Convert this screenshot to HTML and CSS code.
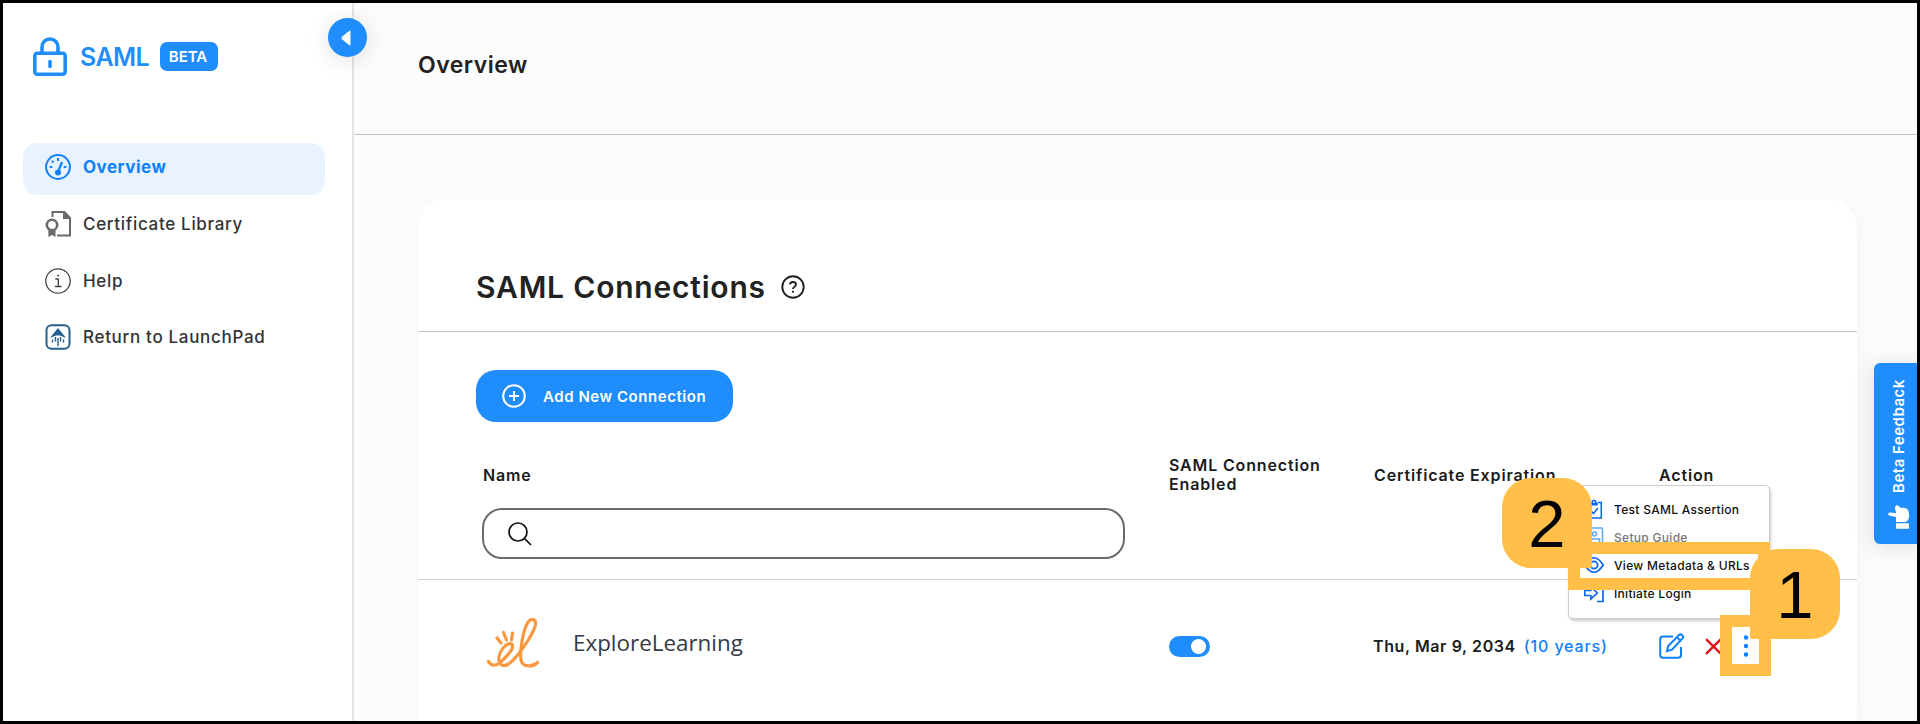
FILE: index.html
```html
<!DOCTYPE html>
<html lang="en">
<head>
<meta charset="utf-8">
<title>SAML Overview</title>
<link rel="stylesheet" href="styles.css">
</head>
<body>
<div class="frame">
  <aside class="sidebar">
    <div class="brand">
      <svg class="brand-lock" viewBox="0 0 34 39" fill="none" stroke="#1f8dfb" stroke-width="3.6"><rect x="1.8" y="16.2" width="30.4" height="21" rx="2.5"/><path d="M9 16V10a8 8 0 0 1 16 0v6"/><path d="M17 24.5v5" stroke-linecap="round"/></svg>
      <span class="brand-name">SAML</span><span class="beta"><span>BETA</span></span>
    </div>
    <nav class="nav">
      <a class="nav-item active">
        <svg viewBox="0 0 26 26" fill="none" stroke="#0f80fb" stroke-width="2"><circle cx="13" cy="13" r="11.9"/><path d="M13 18l4-10" stroke-width="2.2"/><circle cx="13" cy="18.5" r="2" fill="#0f80fb"/><path d="M13 4v3M4.7 13h2.6M18.7 13h2.6M6.8 7l1.8 1.6" stroke-width="2"/></svg>
        <span>Overview</span></a>
      <a class="nav-item">
        <svg viewBox="0 0 26 26" fill="none" stroke="#6b6b6b" stroke-width="2"><path d="M7.5 6V1h12l5.5 6v17.5H12"/><path d="M18 1h2l5 5v2h-7z" fill="#6b6b6b" stroke="none"/><circle cx="7" cy="14" r="5.2" stroke-width="2.6"/><path d="M3.4 18.5V26L7 24l3.500 2v-7.500" fill="#6b6b6b" stroke="none"/></svg>
        <span>Certificate Library</span></a>
      <a class="nav-item">
        <svg viewBox="0 0 26 26" fill="none" stroke="#444" stroke-width="1.3"><circle cx="13" cy="13" r="12.2"/><path d="M10.300 11h3v7.500M9.800 18.500h6.700M12.200 7.500h2"/></svg>
        <span>Help</span></a>
      <a class="nav-item">
        <svg viewBox="0 0 26 26" fill="none" stroke="#24618f" stroke-width="2"><rect x="1.500" y="1.200" width="23" height="23.600" rx="5"/><path d="M13 4l4.500 5.500 3.500 4.500-6-2.500h-4l-6 2.500 3.500-4.500z" fill="#24618f" stroke="none"/><path d="M13 14v8M10.500 13v4.500M15.500 13v4.500M7.500 15.500v3M18.500 15.500v3" stroke-width="1.400"/></svg>
        <span>Return to LaunchPad</span></a>
    </nav>
    <button class="collapse" aria-label="Collapse"><svg viewBox="0 0 10 16"><path d="M9.500 .5v15L8 15 1 9.200Q0 8 1 6.800L8 1z" fill="#fff"/></svg></button>
  </aside>
  <main class="main">
    <header class="topbar"><h1>Overview</h1></header>
    <section class="card">
      <div class="card-head">
        <h2>SAML Connections</h2>
        <svg viewBox="0 0 24 24" fill="none" stroke="#222" stroke-width="1.900"><circle cx="12" cy="12" r="10.700"/><path d="M9 9.400c.2-3.300 6-3.200 6 .2 0 2-3 2.400-3 4.400"/><path d="M12 15.700v2.100"/></svg>
      </div>
      <div class="card-body">
        <button class="add"><svg viewBox="0 0 24 24" fill="none" stroke="#fff" stroke-width="2"><circle cx="12" cy="12" r="10.800"/><path d="M12 7v10M7 12h10"/></svg><span>Add New Connection</span></button>
        <div class="table-head">
          <div class="col-name"><b class="h-name">Name</b>
            <div class="search"><svg viewBox="0 0 24 24" fill="none" stroke="#111" stroke-width="1.700"><circle cx="10" cy="10" r="9"/><path d="M16.500 16.500l6.500 6.500"/></svg></div>
          </div>
          <b class="h-enabled">SAML Connection<br>Enabled</b>
          <b class="h-cert">Certificate Expiration</b>
          <b class="h-action">Action</b>
        </div>
        <div class="row">
          <div class="app">
            <svg viewBox="0 0 52 50" fill="none" stroke="#f9983f" stroke-width="3.200" stroke-linecap="round" stroke-linejoin="round"><path d="M1.500 43.500c3 5.500 9 4.500 15-2 5-5.500 10-10 9-14-1-3-6-2-9 2-5 6-6 13-3 16.500 4 4 10-.5 15-6.500 8-9 19-26 20-33 .6-6-5-7-8-1.500-5 9-8.500 32-6 38.500 2 5.500 11 6 16 1"/><path d="M10 20l4 5M16.500 14.500l3 7.500M25.500 15l-1 7" /></svg>
            <span>ExploreLearning</span>
          </div>
          <div class="toggle"><i></i></div>
          <div class="expiry"><span class="date">Thu, Mar 9, 2034</span><span class="years">(10 years)</span></div>
          <div class="actions">
            <svg class="edit" viewBox="0 0 26 26" fill="none" stroke="#0f80fb" stroke-width="2"><path d="M14 3.500H4Q1.200 3.500 1.200 6.500V22Q1.200 24.800 4 24.800H19Q22 24.800 22 22V14"/><path d="M8 18l1.200-5L20 2q1.500-1.300 3.200.2 1.700 1.600.2 3.300L13 16.700zM18 4.200l3.500 3.500"/></svg>
            <svg class="remove" viewBox="0 0 16 16" fill="none" stroke="#e60f14" stroke-width="2.200"><path d="M1 1l14 14M15 1L1 15"/></svg>
            <svg class="dots" viewBox="0 0 6 24" fill="#0f80fb"><circle cx="3" cy="3.500" r="2.200"/><circle cx="3" cy="12" r="2.200"/><circle cx="3" cy="20.500" r="2.200"/></svg>
          </div>
        </div>
      </div>
    </section>
  </main>

  <div class="menu">
    <div class="menu-item"><svg viewBox="0 0 20 20" fill="none" stroke="#0b66f0" stroke-width="1.600"><path d="M6 3.500H2.800v15.500h14.500V3.500H14M7 4.500h6v1.200H7zM8 4a2 2.500 0 0 1 4 0M6.500 11.500l3 3L14 9"/></svg><span>Test SAML Assertion</span></div>
    <div class="menu-item muted"><svg viewBox="0 0 20 20" fill="none" stroke="#60aaf8" stroke-width="1.600"><rect x="2" y="1" width="16.500" height="18" rx="1"/><circle cx="10.500" cy="7" r="2"/><path d="M5.500 15v-3h10v3"/></svg><span>Setup Guide</span></div>
    <div class="menu-item"><svg viewBox="0 0 20 20" fill="none" stroke="#0b66f0" stroke-width="1.700"><path d="M.8 10Q10-4.500 19.200 10 10 24.500.8 10z"/><circle cx="10" cy="10" r="3.600"/></svg><span>View Metadata &amp; URLs</span></div>
    <div class="menu-item"><svg viewBox="0 0 20 20" fill="none" stroke="#0b66f0" stroke-width="1.700"><path d="M.8 7.500h6V4l6.500 6-6.500 6v-3.500h-6zM13 1.500h6v17h-6"/></svg><span>Initiate Login</span></div>
  </div>
  <div class="outline outline-two"></div>
  <div class="outline outline-one"></div>
  <div class="callout two">2</div>
  <div class="callout one">1</div>

  <div class="feedback"><span>Beta Feedback</span>
    <svg viewBox="0 0 22 24" fill="#fff"><path d="M8 17V12L1 10.500Q-1 8.500 1.500 7.500L8 8 7 3Q7-.5 10 .5L13 3Q18 2 20 5 21.500 9 21 12 20.500 16 17.500 17z"/><rect x="8" y="18.200" width="13" height="5.600" rx="1"/></svg>
  </div>
</div>
</body>
</html>
```
FILE: styles.css
```css
* { box-sizing: border-box; }
body { margin: 0; font-family: Inter, "Liberation Sans", sans-serif; color: #222; }
h1, h2 { margin: 0; }
button { border: 0; padding: 0; font: inherit; }
svg { display: block; flex: none; }
span, b { white-space: nowrap; }

.frame { position: relative; display: flex; width: 1920px; height: 724px; border: 3px solid #000; background: #fcfcfc; overflow: hidden; }

.sidebar { position: relative; flex: none; width: 351px; padding: 34px 27px 0 20px; background: #fff; border-right: 2px solid #e4e4e4; }
.brand { display: flex; align-items: center; height: 39px; padding-left: 10px; color: #1f8dfb; }
.brand-lock { width: 34px; height: 39px; }
.brand-name { width: 80px; padding-left: 13px; font-size: 25px; font-weight: 600; letter-spacing: -.6px; }
.beta { display: flex; align-items: center; justify-content: center; width: 58px; height: 29px; margin-left: 13px; padding-right: 2px; border-radius: 7px; background: #1f8dfb; color: #fff; font-size: 15px; font-weight: 600; }
.nav { display: flex; flex-direction: column; gap: 5px; margin-top: 67px; }
.nav-item { display: flex; align-items: center; gap: 13px; height: 51.5px; padding: 0 0 2px 22px; border-radius: 14px; color: #333; font-size: 17px; font-weight: 500; letter-spacing: .68px; }
.nav-item svg { width: 26px; height: 26px; }
.nav-item.active { padding-bottom: 3px; background: #e8f3ff; color: #0f80fb; font-weight: 700; letter-spacing: .5px; }
.nav-item span { margin-left: -1px; }
.collapse { position: absolute; top: 15px; right: -15px; display: flex; align-items: center; justify-content: center; width: 39px; height: 39px; padding-right: 3px; border-radius: 50%; background: #1f8dfb; box-shadow: 0 3px 22px rgba(0,0,0,.13); z-index: 2; }
.collapse svg { width: 10px; height: 16px; }

.main { flex: 1; display: flex; flex-direction: column; }
.topbar { height: 132px; padding: 46px 0 0 64px; border-bottom: 1px solid #c4c4c4; }
.topbar h1 { font-size: 23px; line-height: 32px; font-weight: 600; letter-spacing: .5px; }
.card { flex: 1; width: 1439px; margin: 64px 0 0 64px; border-radius: 28px 28px 0 0; background: #fff; box-shadow: 4px 4px 20px rgba(0,40,30,.035); }
.card-head { display: flex; align-items: center; gap: 17px; height: 133px; padding: 43px 0 0 58px; border-bottom: 1px solid #c4c4c4; }
.card-head h2 { width: 288px; font-size: 30px; line-height: 36px; font-weight: 600; letter-spacing: .8px; white-space: nowrap; }
.card-head svg { width: 24px; height: 24px; }
.card-body { padding-top: 38px; }
.add { display: flex; align-items: center; gap: 17px; width: 257px; height: 52px; margin-left: 58px; padding-left: 26px; border-radius: 20px; background: #1f8dfb; color: #fff; font-size: 15px; font-weight: 600; letter-spacing: .55px; }
.add svg { width: 24px; height: 24px; }
.table-head { display: grid; grid-template-columns: 751px 205px 285px auto; height: 158px; padding-top: 32px; border-bottom: 1px solid #d0d0d0; font-size: 16px; line-height: 19px; letter-spacing: .85px; }
b { font-weight: 600; color: #1b1b1b; }
.col-name { padding: 12px 0 0 64px; }
.h-name { display: block; padding-left: 1px; }
.search { display: flex; align-items: center; width: 643px; height: 51px; margin-top: 23px; padding-left: 24px; border: 2px solid #6b6b6b; border-radius: 20px; }
.search svg { width: 24px; height: 24px; }
.h-enabled { padding-top: 2px; }
.h-cert, .h-action { padding-top: 12px; }
.row { display: grid; grid-template-columns: 751px 204px 286px auto; height: 132px; align-items: center; }
.app { display: flex; align-items: center; gap: 34px; padding: 0 0 7px 69px; font: 22.4px "Open Sans", "Noto Sans", sans-serif; color: #333a45; }
.app svg { width: 52px; height: 50px; }
.toggle { display: flex; justify-content: flex-end; width: 41px; height: 21px; padding: 3px 4px 3px 0; border-radius: 11px; background: #1f8dfb; }
.toggle i { width: 15px; height: 15px; border-radius: 50%; background: #fff; }
.expiry { display: flex; gap: 8px; font-size: 16px; font-weight: 600; letter-spacing: .6px; color: #1b1b1b; }
.years { color: #0f80fb; font-weight: 500; letter-spacing: .85px; }
.actions { display: flex; align-items: center; }
.edit { width: 26px; height: 26px; }
.remove { width: 17px; height: 17px; margin-left: 20px; }
.dots { width: 6px; height: 24px; margin-left: 21px; }

.menu { position: absolute; left: 1565px; top: 482px; width: 202px; height: 134px; padding: 11px 0 0 15px; border: 1px solid #ccc; border-radius: 5px; background: #fff; box-shadow: 1px 2px 3px rgba(0,0,0,.2); color: #111; font-size: 12px; font-weight: 500; letter-spacing: .3px; }
.menu-item { display: flex; align-items: center; gap: 10px; height: 28px; margin-top: -2px; margin-bottom: 2px; }
.menu-item svg { width: 20px; height: 20px; }
.menu-item.muted { color: #777; }
.outline { position: absolute; border: 12px solid #ffbf48; }
.outline-two { left: 1565px; top: 539px; width: 202px; height: 48px; }
.outline-one { left: 1717px; top: 612px; width: 51px; height: 61px; }
.callout { position: absolute; display: flex; align-items: center; justify-content: center; width: 90px; height: 90px; background: #ffbf48; color: #000; font: 67px "Liberation Sans", Arial, sans-serif; }
.callout.two { left: 1499px; top: 475px; border-radius: 29px 29px 2px 29px; }
.callout.one { left: 1747px; top: 546px; border-radius: 29px 29px 29px 2px; }

.feedback { position: absolute; left: 1871px; top: 360px; display: flex; flex-direction: column; align-items: center; width: 46px; height: 181px; padding: 15px 0 0 4px; border-radius: 6px 0 0 6px; background: #1f8dfb; color: #fff; box-shadow: 0 2px 22px rgba(0,0,0,.13); font-size: 15px; font-weight: 600; letter-spacing: .5px; }
.feedback span { height: 115px; line-height: 20px; writing-mode: vertical-rl; transform: rotate(180deg); }
.feedback svg { width: 22px; height: 24px; margin-top: 12px; }
```
